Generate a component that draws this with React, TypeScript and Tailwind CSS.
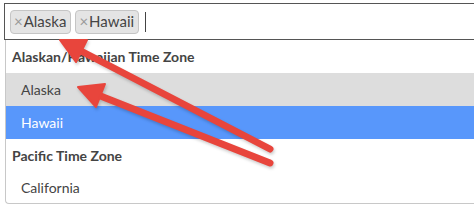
const font = { fontFamily: "Lato, 'Open Sans', sans-serif" }

function Tag({ label }: { label: string }) {
  return (
    <span className="flex h-[24px] items-center rounded-[4px] border border-[#c5c5c5] bg-[#e4e4e4] pl-[3px] pr-[4px] text-[15px] text-[#444]">
      <span className="mr-[1px] text-[15px] text-[#999]">×</span>
      {label}
    </span>
  )
}

function Arrows() {
  return (
    <svg
      className="pointer-events-none absolute left-0 top-0"
      width="474"
      height="206"
      viewBox="0 0 474 206"
      style={{ filter: "drop-shadow(1px 2px 1.5px rgba(0,0,0,0.2))" }}
    >
      <g fill="#e8453c" stroke="#e8453c" strokeLinecap="round" strokeLinejoin="round">
        <line x1="270" y1="149" x2="79" y2="50" strokeWidth="7" />
        <polygon points="60,40 87,40 76,62" strokeWidth="2" />
        <line x1="270" y1="163" x2="98" y2="95" strokeWidth="7" />
        <polygon points="78,87 105,84 96,107" strokeWidth="2" />
      </g>
    </svg>
  )
}

export default function App() {
  return (
    <div className="relative h-[206px] w-[474px] overflow-hidden bg-white" style={font}>
      <div className="ml-[4px] mt-[3px] flex h-[37px] w-[480px] items-center gap-[4px] border border-[#555] pl-[5px]">
        <Tag label="Alaska" />
        <Tag label="Hawaii" />
        <span className="ml-[2px] h-[20px] w-[1px] bg-[#444]" />
      </div>
      <div className="ml-[5px] w-[480px] rounded-bl-[4px] border-b border-l border-[#c8c8c8] text-[14px] leading-[21px] text-[#444]">
        <div className="py-[6px] pl-[6px] font-bold">Alaskan/Hawaiian Time Zone</div>
        <div className="bg-[#dddddd] py-[6px] pl-[15px]">Alaska</div>
        <div className="bg-[#5897fb] py-[6px] pl-[15px] text-white">Hawaii</div>
        <div className="py-[6px] pl-[6px] font-bold">Pacific Time Zone</div>
        <div className="py-[5px] pl-[15px]">California</div>
      </div>
      <Arrows />
    </div>
  )
}
